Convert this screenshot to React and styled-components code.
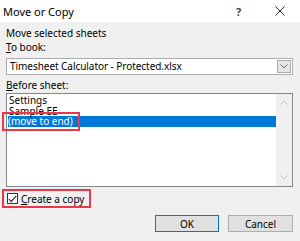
import styled, { createGlobalStyle } from "styled-components";

const GlobalStyle = createGlobalStyle`
    html, body {
        margin: 0;
        padding: 0;
        background: #f0f0f0;
    }
    body {
        width: 300px;
        height: 241px;
        overflow: hidden;
        font-family: "Noto Sans", "Open Sans", sans-serif;
        font-size: 10px;
        color: #000;
    }
`;

const sheets = ["Settings", "Sample EE"];

export default function App() {
    return (
        <Dialog>
            <GlobalStyle />
            <TitleBar>
                <Title>Move or Copy</Title>
                <TitleButton>?</TitleButton>
                <TitleButton>
                    <svg width="10" height="10" viewBox="0 0 10 10">
                        <path d="M0.5 0.5 L9.5 9.5 M9.5 0.5 L0.5 9.5" stroke="#222" strokeWidth="1" />
                    </svg>
                </TitleButton>
            </TitleBar>
            <Body>
                <Label $top={5}>Move selected sheets</Label>
                <Label $top={1}>
                    <u>T</u>o book:
                </Label>
                <Combo>
                    <ComboText>Timesheet Calculator - Protected.xlsx</ComboText>
                    <ComboButton>
                        <svg width="8" height="5" viewBox="0 0 8 5">
                            <path d="M0.5 0.5 L4 4 L7.5 0.5" stroke="#707070" fill="none" />
                        </svg>
                    </ComboButton>
                </Combo>
                <Label $top={4}>
                    <u>B</u>efore sheet:
                </Label>
                <ListBox>
                    <Items>
                        {sheets.map((s) => (
                            <Item key={s}>{s}</Item>
                        ))}
                        <Item $selected>
                            <Marked>(move to end)</Marked>
                        </Item>
                    </Items>
                    <ScrollBar>
                        <svg width="8" height="5" viewBox="0 0 8 5">
                            <path d="M0.5 4.5 L4 1 L7.5 4.5" stroke="#c4c4c4" fill="none" />
                        </svg>
                        <svg width="8" height="5" viewBox="0 0 8 5">
                            <path d="M0.5 0.5 L4 4 L7.5 0.5" stroke="#c4c4c4" fill="none" />
                        </svg>
                    </ScrollBar>
                </ListBox>
                <CheckRow>
                    <CheckBox>
                        <svg width="9" height="8" viewBox="0 0 9 8">
                            <path d="M0.8 4 L3.2 6.6 L8.3 0.8" stroke="#222" strokeWidth="1.1" fill="none" />
                        </svg>
                    </CheckBox>
                    <span>
                        <u>C</u>reate a copy
                    </span>
                </CheckRow>
                <Buttons>
                    <Button $default>OK</Button>
                    <Button>Cancel</Button>
                </Buttons>
            </Body>
        </Dialog>
    );
}

const Dialog = styled.div`
    width: 300px;
    height: 241px;
    display: flex;
    flex-direction: column;
    background: #f0f0f0;
`;

const TitleBar = styled.div`
    height: 22px;
    background: #fff;
    display: flex;
    align-items: center;
    padding-left: 3px;
`;

const Title = styled.div`
    flex: 1;
    font-size: 11px;
    padding-top: 1px;
`;

const TitleButton = styled.div`
    width: 41px;
    height: 22px;
    display: flex;
    align-items: center;
    justify-content: center;
    font-size: 11px;
    font-weight: bold;
    color: #444;
    &:first-of-type {
        padding-left: 4px;
    }
`;

const Body = styled.div`
    display: flex;
    flex-direction: column;
    padding: 0 7px 0 6px;
`;

const Label = styled.div`
    margin-top: ${(p) => p.$top}px;
    line-height: 13px;
    height: 13px;
    white-space: nowrap;
`;

const Combo = styled.div`
    margin-top: 4px;
    height: 17px;
    box-sizing: border-box;
    border: 1px solid #adadad;
    background: #fff;
    display: flex;
    align-items: stretch;
`;

const ComboText = styled.div`
    flex: 1;
    padding-left: 3px;
    line-height: 15px;
    white-space: nowrap;
    letter-spacing: -0.05px;
`;

const ComboButton = styled.div`
    width: 14px;
    margin: 1px;
    background: #e5e5e5;
    border: 1px solid #acacac;
    box-sizing: border-box;
    display: flex;
    align-items: center;
    justify-content: center;
`;

const ListBox = styled.div`
    margin-top: 1px;
    height: 94px;
    box-sizing: border-box;
    border: 1px solid #828790;
    background: #fff;
    display: flex;
`;

const Items = styled.div`
    flex: 1;
    padding-top: 1px;
    padding-left: 1px;
`;

const Item = styled.div`
    height: 10.5px;
    line-height: 10.5px;
    padding-left: 1px;
    white-space: nowrap;
    background: ${(p) => (p.$selected ? "#0078d7" : "transparent")};
    color: ${(p) => (p.$selected ? "#fff" : "#000")};
`;

const Marked = styled.span`
    display: inline-block;
    line-height: 10.5px;
    outline: 2px solid #e8394a;
    outline-offset: 2px;
    margin-left: -3px;
    padding: 0 3px 0 2px;
`;

const ScrollBar = styled.div`
    width: 16px;
    background: #f0f0f0;
    display: flex;
    flex-direction: column;
    justify-content: space-between;
    align-items: center;
    padding: 6px 0 6px;
`;

const CheckRow = styled.div`
    margin-top: 2px;
    margin-left: -4px;
    width: 82px;
    height: 15px;
    border: 2px solid #e8394a;
    display: flex;
    align-items: center;
    gap: 3px;
    padding-left: 3px;
`;

const CheckBox = styled.div`
    width: 11px;
    height: 11px;
    box-sizing: border-box;
    border: 1px solid #333;
    background: #fff;
    display: flex;
    align-items: center;
    justify-content: center;
`;

const Buttons = styled.div`
    margin-top: 7px;
    display: flex;
    justify-content: flex-end;
    gap: 9px;
`;

const Button = styled.div`
    width: ${(p) => (p.$default ? "64px" : "65px")};
    height: 17px;
    box-sizing: border-box;
    border: 1px solid ${(p) => (p.$default ? "#0078d7" : "#adadad")};
    background: #e1e1e1;
    display: flex;
    align-items: center;
    justify-content: center;
`;
